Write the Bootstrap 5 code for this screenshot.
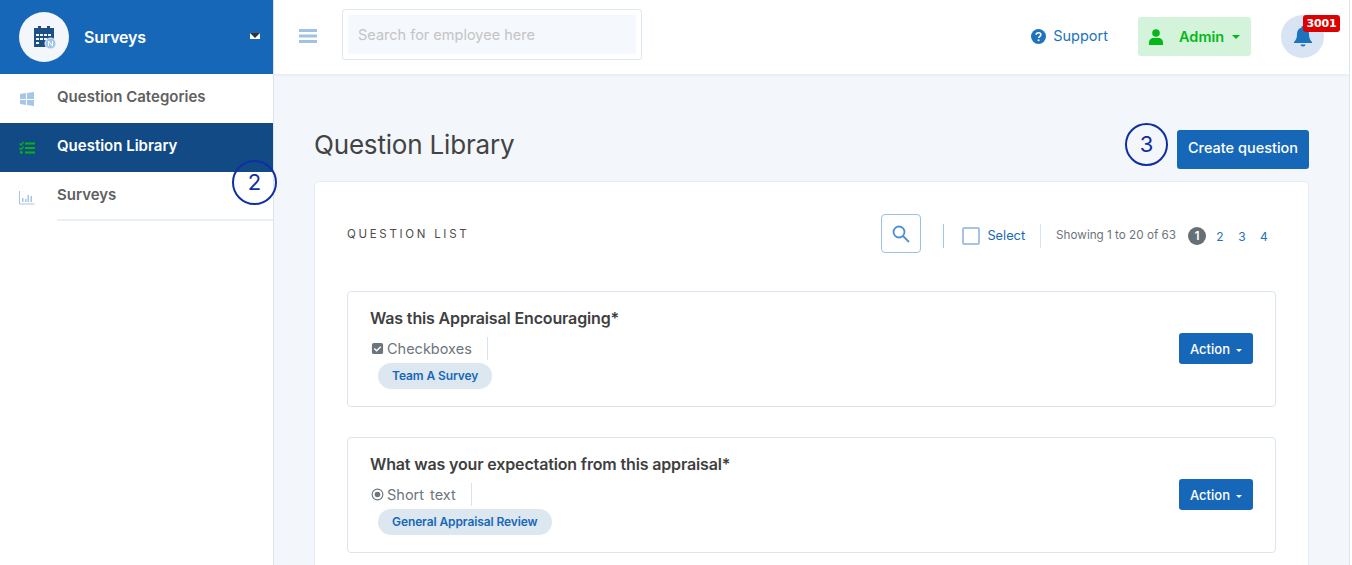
<!DOCTYPE html>
<html lang="en">
<head>
<meta charset="utf-8">
<title>Question Library</title>
<link href="https://cdn.jsdelivr.net/npm/bootstrap@5.3.0/dist/css/bootstrap.min.css" rel="stylesheet">
<style>
html,body{height:565px;overflow:hidden}
body{font-family:Inter,"Noto Sans",sans-serif;background:#f3f6fb;color:#3f3f3f}
.shell{height:565px;position:relative;overflow:hidden}
.side{width:274px;flex:none;background:#fff;border-right:1px solid #dbe5f2;height:565px}
.side-head{height:74px;background:#1767b8;padding-left:19px;padding-right:13px}
.logo-disc{width:50px;height:50px;border-radius:50%;background:#f3f6fb}
.side-title{font-size:16px;font-weight:600;color:#fff;margin-left:15px;letter-spacing:-.2px}
.caret-box{width:10px;height:6px;background:#fff;position:relative;overflow:hidden;margin-bottom:2px}
.caret-box::after{content:"";position:absolute;left:0;top:0;border-left:5px solid transparent;border-right:5px solid transparent;border-top:5px solid #333}
.side-item{height:49px;font-size:15px;font-weight:600;color:#5f5f5f;padding-left:19px;padding-bottom:3px;text-decoration:none}
.side-item svg{width:16px;height:16px;margin-right:22px;flex:none;margin-top:3px}
.side-item.is-active{background:#124a85;color:#fff}
.side-rule{margin-left:57px;margin-top:-2px;border-bottom:2px solid #e9eff8}
.main-col{min-width:0;height:565px}
.top{height:74px;flex:none;background:#fff;box-shadow:0 1px 3px rgba(40,80,140,.08);padding-left:25px;padding-right:25px}
.burger{width:18px;height:16px;flex:none;margin-bottom:3px}
.search-frame{width:300px;height:51px;margin-left:25px;margin-bottom:6px;border:1px solid #dde7f4;border-radius:3px;padding:5px;background:#fff}
.search-frame input{width:100%;height:100%;border:0;background:#f5f8fc;padding:0 10px;font-size:14.5px;outline:0;border-radius:3px}
.search-frame input::placeholder{color:#c4c4c4}
.support{font-size:14.5px;color:#1d73bd;text-decoration:none;margin-right:30px;margin-bottom:2px}
.support svg{margin-right:-1px}
.admin-btn{width:113px;height:39px;background:#d3f3db;color:#05b818;font-size:14.5px;font-weight:600;border-radius:3px;border:0;padding:0 0 0 11px;margin-right:30px;margin-bottom:1px}
.admin-btn::after{margin-left:8px;vertical-align:.2em}
.bell-disc{width:43px;height:43px;border-radius:50%;background:#d8e4f3;position:relative;margin-bottom:1px}
.count-tag{position:absolute;left:22px;top:0;height:17px;width:37px;font-size:11px;line-height:17px;font-weight:800;text-align:center;color:#fff;background:#dc0000;border-radius:3px;font-family:"DejaVu Sans",sans-serif;letter-spacing:-.2px}
.content{padding:0 40px 0 40px;flex:1 1 0;min-height:0;overflow:hidden}
.page-row{height:107px;padding-top:56px}
.page-title{font-size:26px;font-weight:400;color:#434343;margin:0;letter-spacing:-.18px;line-height:30px}
.brand-btn{background:#1767b8;color:#fff;border:0;border-radius:3px;font-size:14.5px;font-weight:500}
.create-btn{width:132px;height:39px;padding:0 0 4px}
.panel{background:#fff;border:1px solid #e6edf6;border-radius:5px;padding:32px 32px 0 32px;height:420px}
.panel-bar{height:42px;margin-bottom:35px;padding-right:1px;padding-top:1px}
.panel-label{font-size:11.5px;letter-spacing:2.7px;color:#4d4d4d;font-weight:400;margin-top:-2px}
.find-btn{width:40px;height:39px;border:1px solid #9cc1e6;border-radius:4px;background:#fff;padding:0;margin-bottom:4px}
.vsep{width:1px;height:24px;background:#a9c8e8;margin:0 18px 0 22px}
.vsep.pale{background:#d5e3f2;margin:0 15px}
.tick-box{width:18px;height:18px;border:2px solid #a4c3e6;border-radius:2px;margin-right:7px}
.sel-text{font-size:12.8px;color:#1767b8}
.show-text{font-size:11.7px;color:#6c757d;margin-right:12px;margin-top:1px}
.page-dot{width:18px;height:18px;border-radius:50%;background:#666e76;color:#fff;font-size:12px;font-weight:600;margin:1px 3px 0 0}
.page-num{font-size:12px;color:#1d73bd;text-decoration:none;width:22px;text-align:center;margin-top:2px}
.q-box{height:116px;border:1px solid #dbe5f2;border-radius:4px;padding:16px 22px;margin-bottom:30px;width:929px}
.q-left{margin-bottom:2px}
.q-title{font-size:16px;font-weight:600;color:#3f3f3f;line-height:21px;letter-spacing:-.15px;margin:0}
.q-type{font-size:14.5px;color:#6c757d;height:23px;margin-top:8px;word-spacing:2px}
.q-type svg{width:13px;height:13px;margin:0 3px 0 1px}
.q-type span{padding-right:15px;border-right:1px solid #d5e3f2;line-height:23px}
.q-tag{display:inline-block;font-size:12px;font-weight:600;color:#1767b8;background:#dde7f0;border-radius:13px;line-height:26px;height:26px;padding:0 14px;margin:3px 0 0 8px;letter-spacing:-.1px}
.act-btn{width:74px;height:31px;font-size:13px;padding:3px 0 0;margin-bottom:2px}
.act-btn::after{margin-left:6px;vertical-align:.15em;border-top-width:.25em;border-right-width:.25em;border-left-width:.25em}
.note-ring{position:absolute;width:45px;height:45px;border:2px solid #0f2fa3;border-radius:50%;color:#0f2fa3;font-size:22px;font-weight:400;background:transparent}
.ring-two{left:232px;top:160px}
.ring-three{left:1125px;top:123px;width:43px;height:43px}
.edge-strip{width:3px;flex:none;background:#fff;border-left:1px solid #dbe5f2}
</style>
</head>
<body>
<div class="shell d-flex">
  <aside class="side">
    <div class="side-head d-flex align-items-center">
      <div class="logo-disc d-flex align-items-center justify-content-center">
        <svg width="24" height="24" viewBox="0 0 24 24" aria-hidden="true">
          <rect x="6" y="1" width="3" height="3" fill="#1b4f86"/><rect x="15" y="1" width="3" height="3" fill="#1b4f86"/>
          <rect x="2" y="3" width="20" height="19" fill="#1b4f86"/>
          <g fill="#f3f6fb"><rect x="4" y="9" width="3" height="2"/><rect x="8" y="9" width="3" height="2"/><rect x="12" y="9" width="3" height="2"/><rect x="16" y="9" width="3" height="2"/><rect x="4" y="13" width="3" height="2"/><rect x="8" y="13" width="3" height="2"/><rect x="12" y="13" width="3" height="2"/><rect x="4" y="17" width="3" height="2"/></g>
          <circle cx="18.500" cy="18.500" r="5.500" fill="#a5c5e8" stroke="#f3f6fb"/>
          <path d="M16.500 21v-5l4 5v-5" fill="none" stroke="#fff" stroke-width="1"/>
        </svg>
      </div>
      <div class="side-title flex-grow-1">Surveys</div>
      <div class="caret-box"></div>
    </div>
    <a class="side-item d-flex align-items-center" href="#">
      <svg viewBox="0 0 16 16" aria-hidden="true"><path d="M1 3l6-1v6H1zM8 2l7-1v7H8zM1 9h6v5l-6-1zM8 9h7v6l-7-1z" fill="#a6c6e8"/></svg>
      Question Categories
    </a>
    <a class="side-item is-active d-flex align-items-center" href="#">
      <svg viewBox="0 0 16 16" aria-hidden="true"><path d="M6 2.500h10v2H6zM6 7h10v2H6zM6 11.500h10v2H6z" fill="#06b315"/><path d="M.5 3.500l1.500 1.500L4.500 2M.5 8l1.500 1.500L4.500 6.500" fill="none" stroke="#06b315" stroke-width="1.300"/><circle cx="2.300" cy="12.500" r="1.400" fill="#06b315"/></svg>
      Question Library
    </a>
    <a class="side-item d-flex align-items-center" href="#">
      <svg viewBox="0 0 16 16" aria-hidden="true"><path d="M.5 2v13h15" fill="none" stroke="#a6c6e8"/><path d="M3 9h1.500v4H3zM6 10h1.500v3H6zM8.500 6H10v7H8.500zM11.500 7H13v6h-1.500z" fill="#a6c6e8"/></svg>
      Surveys
    </a>
    <div class="side-rule"></div>
  </aside>
  <div class="main-col flex-grow-1 d-flex flex-column">
    <header class="top d-flex align-items-center">
      <svg class="burger" viewBox="0 0 18 16" preserveAspectRatio="none" aria-hidden="true"><path d="M0 1h18v3H0zM0 6.500h18v3H0zM0 12h18v3H0z" fill="#a0c2e5"/></svg>
      <div class="search-frame"><input type="text" placeholder="Search for employee here" aria-label="Search"></div>
      <div class="flex-grow-1"></div>
      <a class="support d-flex align-items-center gap-2" href="#">
        <svg width="15" height="15" viewBox="0 0 16 16" aria-hidden="true"><circle cx="8" cy="8" r="8" fill="#1d73bd"/><path d="M5.500 6.200C5.500 4.800 6.700 4 8 4s2.500.8 2.500 2.200c0 2-2.400 1.800-2.400 3.400" fill="none" stroke="#fff" stroke-width="1.700"/><circle cx="8.100" cy="12" r="1.100" fill="#fff"/></svg>
        Support
      </a>
      <button class="admin-btn dropdown-toggle d-flex align-items-center" type="button">
        <svg width="14" height="16" viewBox="0 0 14 16" class="me-3" aria-hidden="true"><circle cx="7" cy="4" r="3.800" fill="#05b818"/><path d="M0 16v-2.500C0 10.500 2.500 9 4 9h6c1.500 0 4 1.500 4 4.500V16z" fill="#05b818"/></svg>
        <span>Admin</span>
      </button>
      <div class="bell-disc d-flex align-items-center justify-content-center">
        <svg width="18" height="21" viewBox="0 0 18 21" aria-hidden="true"><path d="M9 0a1.500 1.500 0 0 1 1.500 1.800C13.500 2.500 15 5 15 8c0 4 1 6 3 8v1H0v-1c2-2 3-4 3-8 0-3 1.500-5.500 4.500-6.200A1.500 1.500 0 0 1 9 0z" fill="#1d73bd"/><path d="M6.500 18.500h5a2.500 2 0 0 1-5 0z" fill="#1d73bd"/></svg>
        <div class="count-tag">3001</div>
      </div>
    </header>
    <main class="content">
      <div class="page-row d-flex justify-content-between align-items-start">
        <h1 class="page-title">Question Library</h1>
        <button class="brand-btn create-btn" type="button">Create question</button>
      </div>
      <section class="panel">
        <div class="panel-bar d-flex align-items-center">
          <div class="panel-label flex-grow-1">QUESTION LIST</div>
          <button class="find-btn d-flex align-items-center justify-content-center" type="button" aria-label="Search">
            <svg width="18" height="18" viewBox="0 0 18 18" aria-hidden="true"><circle cx="7" cy="7" r="5.500" fill="none" stroke="#4d8fd0" stroke-width="1.800"/><path d="M11 11l6 6" stroke="#4d8fd0" stroke-width="1.800"/></svg>
          </button>
          <div class="vsep"></div>
          <div class="tick-box"></div>
          <div class="sel-text">Select</div>
          <div class="vsep pale"></div>
          <div class="show-text">Showing 1 to 20 of 63</div>
          <div class="page-dot d-flex align-items-center justify-content-center">1</div>
          <a class="page-num" href="#">2</a><a class="page-num" href="#">3</a><a class="page-num" href="#">4</a>
        </div>
        <article class="q-box d-flex align-items-center">
          <div class="q-left flex-grow-1">
            <h2 class="q-title">Was this Appraisal Encouraging*</h2>
            <div class="q-type d-flex align-items-center">
              <svg viewBox="0 0 14 14" aria-hidden="true"><rect x="1" y="1" width="12" height="12" rx="2" fill="#6c757d"/><path d="M3.500 7l2.500 2.500L10.500 5" fill="none" stroke="#fff" stroke-width="1.500"/></svg>
              <span>Checkboxes</span>
            </div>
            <div class="q-tag">Team A Survey</div>
          </div>
          <button class="brand-btn act-btn dropdown-toggle" type="button">Action</button>
        </article>
        <article class="q-box d-flex align-items-center">
          <div class="q-left flex-grow-1">
            <h2 class="q-title">What was your expectation from this appraisal*</h2>
            <div class="q-type d-flex align-items-center">
              <svg viewBox="0 0 14 14" aria-hidden="true"><circle cx="7" cy="7" r="5.800" fill="none" stroke="#6c757d" stroke-width="1.200"/><circle cx="7" cy="7" r="3" fill="#6c757d"/></svg>
              <span>Short text</span>
            </div>
            <div class="q-tag">General Appraisal Review</div>
          </div>
          <button class="brand-btn act-btn dropdown-toggle" type="button">Action</button>
        </article>
      </section>
    </main>
  </div>
  <div class="edge-strip"></div>
  <div class="note-ring ring-two d-flex align-items-center justify-content-center">2</div>
  <div class="note-ring ring-three d-flex align-items-center justify-content-center">3</div>
</div>
<script src="https://cdn.jsdelivr.net/npm/bootstrap@5.3.0/dist/js/bootstrap.bundle.min.js"></script>
</body>
</html>
